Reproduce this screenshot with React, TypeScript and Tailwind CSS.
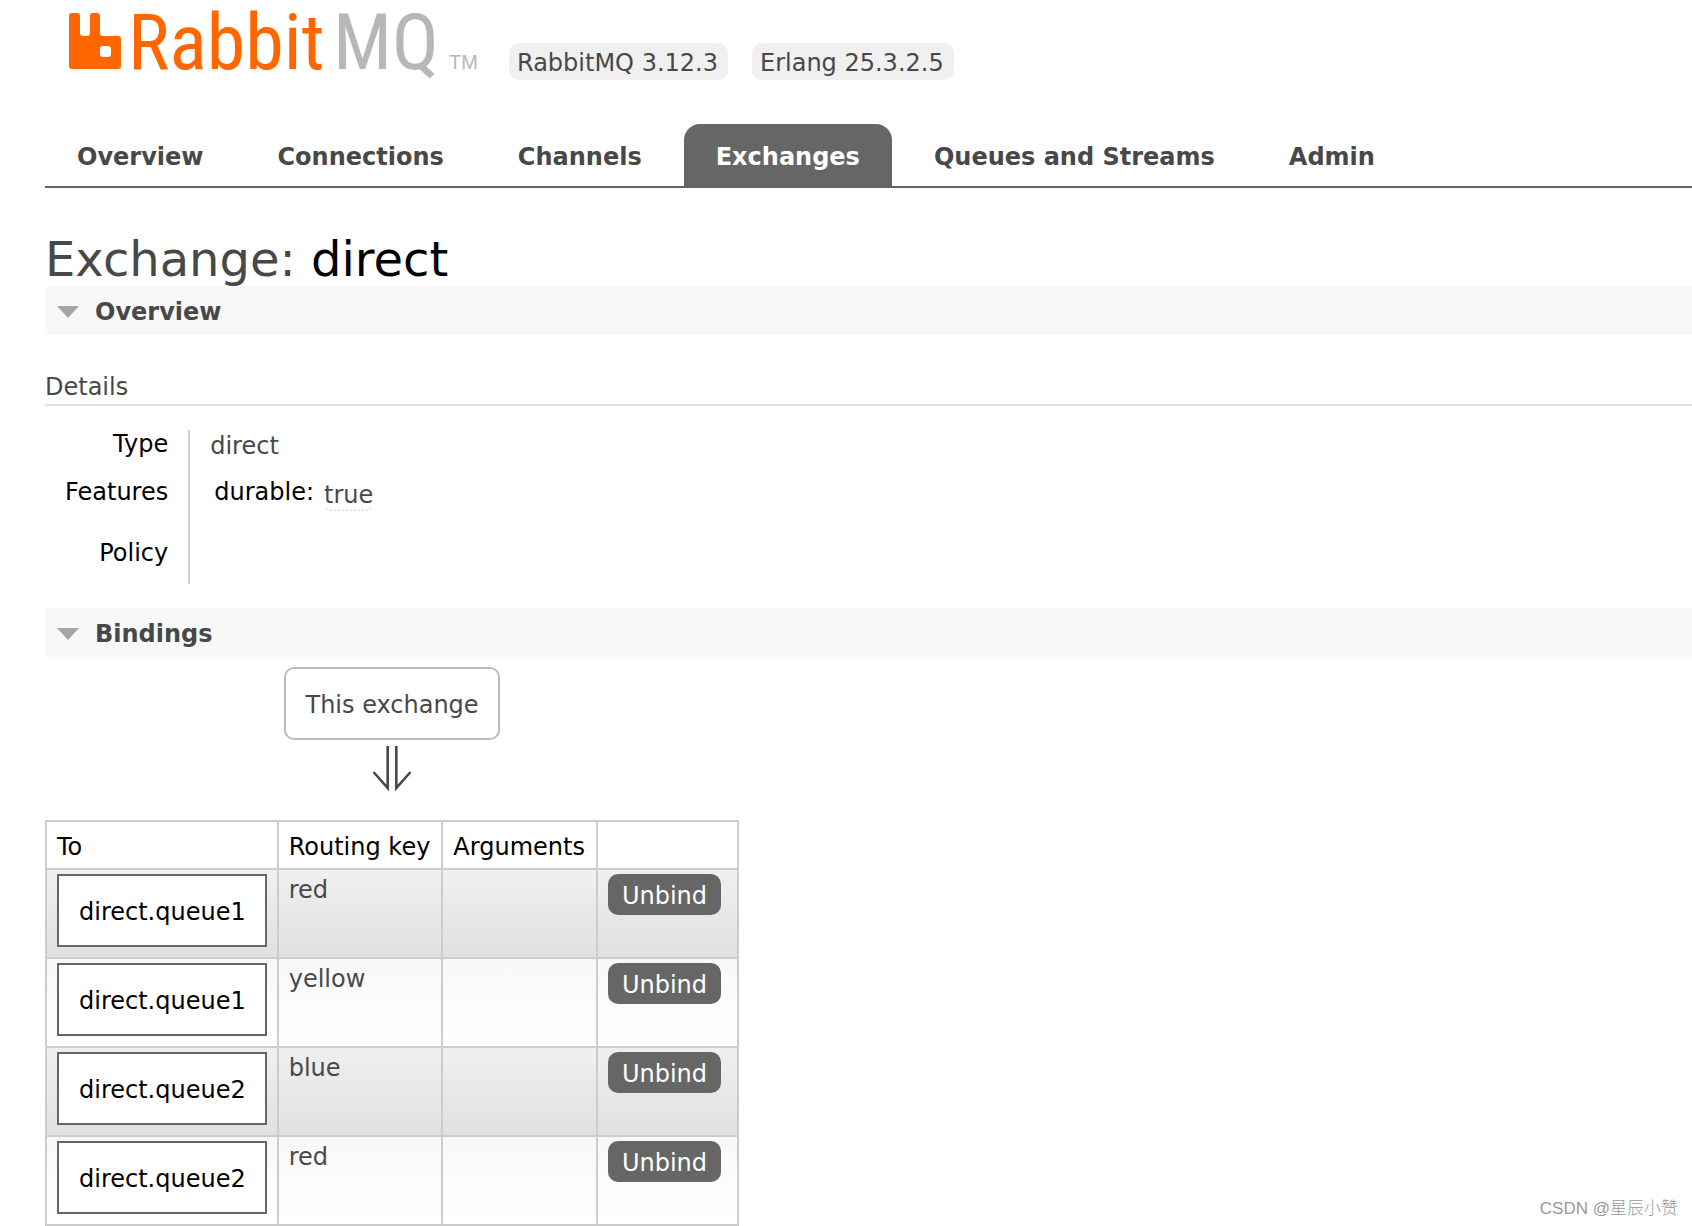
const tabs = ["Overview", "Connections", "Channels", "Exchanges", "Queues and Streams", "Admin"];

const bindings = [
  { queue: "direct.queue1", key: "red" },
  { queue: "direct.queue1", key: "yellow" },
  { queue: "direct.queue2", key: "blue" },
  { queue: "direct.queue2", key: "red" },
];

function Logo() {
  return (
    <svg className="overflow-visible" width="412" height="92" viewBox="0 0 412 92" role="img" aria-label="RabbitMQ">
      <path
        fill="#ff6600"
        fillRule="evenodd"
        d="M3 13H8Q11 13 11 16V33Q11 36 14 36H18Q21 36 21 33V16Q21 13 24 13H28Q31 13 31 16V33Q31 36 34 36H49Q52 36 52 39V66Q52 69 49 69H3Q0 69 0 66V16Q0 13 3 13ZM34 46Q31 46 31 49V54Q31 57 34 57H39Q42 57 42 54V49Q42 46 39 46Z"
      />
      <g fontFamily="'Roboto Condensed', Roboto, sans-serif" fontWeight="400" fontSize="78">
        <text x="59" y="69" fill="#ff6600">Rabbit</text>
        <text x="264" y="69" fill="#b7b7b7">MQ</text>
      </g>
      <text x="380" y="69" fill="#b7b7b7" fontFamily="'Liberation Sans', sans-serif" fontSize="20">TM</text>
    </svg>
  );
}

function SectionBar({ title }: { title: string }) {
  return (
    <h2 className="bg-[#f8f8f8] font-bold">
      <button type="button" className="flex h-[49px] w-full items-center gap-4 pt-[2px] pl-3 text-left">
        <svg width="22" height="12" viewBox="0 0 22 12" aria-hidden="true">
          <path d="M0 0H22L11 12Z" fill="#a6a6a6" />
        </svg>
        {title}
      </button>
    </h2>
  );
}

export default function App() {
  return (
    <div className="relative min-h-screen bg-white pb-px pl-[45px] font-['DejaVu_Sans',Verdana,sans-serif] text-[24px] leading-8 text-[#484848]">
      <header>
        <div className="flex h-[124px] items-start pl-6">
          <a href="#" className="mr-7 block">
            <Logo />
          </a>
          <ul className="flex gap-6 pt-[43px]">
            <li className="rounded-[10px] bg-[#f0f0f0] pt-1 pr-[10px] pb-px pl-2">RabbitMQ 3.12.3</li>
            <li className="rounded-[10px] bg-[#f0f0f0] pt-1 pr-[10px] pb-px pl-2">Erlang 25.3.2.5</li>
          </ul>
        </div>
        <nav className="flex gap-[10px] border-b-2 border-[#666666] font-bold">
          {tabs.map((t) => (
            <a
              key={t}
              href="#"
              className={
                t === "Exchanges"
                  ? "rounded-t-[16px] bg-[#666666] px-8 pt-[17px] pb-[13px] text-white"
                  : "px-8 pt-[17px] pb-[13px]"
              }
            >
              {t}
            </a>
          ))}
        </nav>
      </header>

      <main>
        <h1 className="pt-11 text-[48px] leading-[54px]">
          Exchange: <b className="font-normal text-black">direct</b>
        </h1>
        <SectionBar title="Overview" />

        <h3 className="mt-9 border-b-2 border-[#e0e0e0] pb-[1px]">Details</h3>
        <table className="mt-6 mb-6 border-collapse leading-7">
          <tbody>
            <tr>
              <th className="h-12 min-w-[144px] border-r-2 border-[#cccccc] pr-5 text-right align-top font-normal text-black">Type</th>
              <td className="pt-[2px] pl-5 align-top">direct</td>
            </tr>
            <tr>
              <th className="h-[61px] border-r-2 border-[#cccccc] pr-5 pl-5 text-right align-top font-normal text-black">Features</th>
              <td className="pl-6 align-top">
                <div className="flex gap-[10px]">
                  <span className="text-black">durable:</span>
                  <abbr title="durable: true" className="mt-[3px] rounded-[6px] border-b-2 border-dotted border-[#dddddd] no-underline">
                    true
                  </abbr>
                </div>
              </td>
            </tr>
            <tr>
              <th className="h-[45px] border-r-2 border-[#cccccc] pr-5 text-right align-top font-normal text-black">Policy</th>
              <td />
            </tr>
          </tbody>
        </table>

        <SectionBar title="Bindings" />
        <div className="w-fit pt-[10px]">
          <div className="flex flex-col items-center">
            <span className="rounded-[10px] border-2 border-[#bbbbbb] px-[19px] pt-5 pb-[17px]">This exchange</span>
            <svg className="mt-[5px] mb-[29px]" width="40" height="46" viewBox="0 0 40 46" fill="none" stroke="#484848" aria-label="binds to">
              <path strokeWidth="2.6" d="M15.7 1V43L1.5 27M24.3 1V43L38.5 27" />
            </svg>
          </div>
          <table className="border-collapse text-left">
            <thead className="text-black">
              <tr>
                {["To", "Routing key", "Arguments", ""].map((h, i) => (
                  <th key={i} className="border-2 border-[#cccccc] pt-[9px] pr-[11px] pb-[5px] pl-[10px] font-normal whitespace-nowrap">
                    {h}
                  </th>
                ))}
              </tr>
            </thead>
            <tbody>
              {bindings.map((b, i) => (
                <tr
                  key={i}
                  className={i % 2 === 0 ? "bg-linear-to-b from-[#f0f0f0] to-[#e0e0e0]" : "bg-linear-to-b from-[#f8f8f8] to-white"}
                >
                  <td className="border-2 border-[#cccccc] px-[10px] pt-1 pb-[10px] align-top">
                    <a href="#" className="block border-2 border-[#666666] bg-white pt-5 pr-[19px] pb-[17px] pl-5 text-black">
                      {b.queue}
                    </a>
                  </td>
                  <td className="border-2 border-[#cccccc] px-[10px] pt-1 align-top">{b.key}</td>
                  <td className="border-2 border-[#cccccc]" />
                  <td className="border-2 border-[#cccccc] pt-1 pr-4 pl-[10px] align-top">
                    <button type="button" className="block rounded-[10px] bg-[#666666] px-[14px] pt-[6px] pb-[3px] text-white">
                      Unbind
                    </button>
                  </td>
                </tr>
              ))}
            </tbody>
          </table>
        </div>
      </main>

      <p className="absolute right-[14px] bottom-[6px] font-['Liberation_Sans','Noto_Sans_CJK_SC',sans-serif] text-[17px] leading-6 font-light text-[#999999]">
        CSDN @星辰小赞
      </p>
    </div>
  );
}
